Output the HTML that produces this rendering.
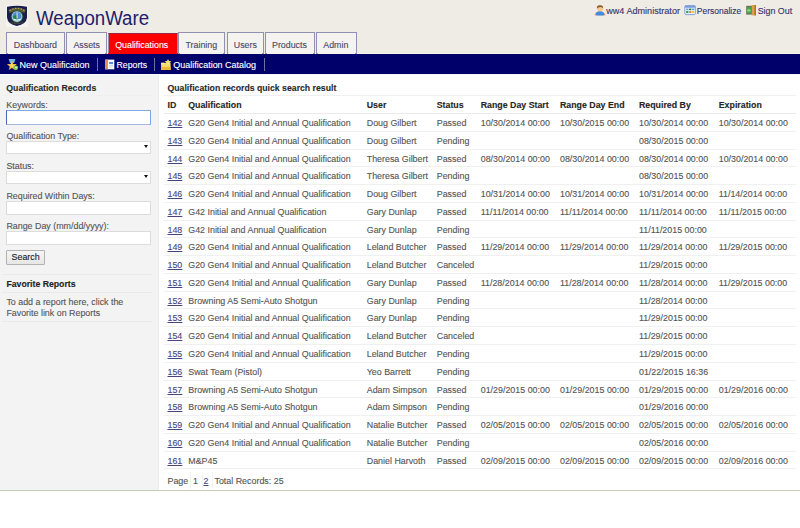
<!DOCTYPE html>
<html><head><meta charset="utf-8"><title>WeaponWare</title>
<style>
html,body{margin:0;padding:0;width:800px;height:528px;overflow:hidden;background:#fff;}
body{position:relative;font-family:"Liberation Sans",sans-serif;}
.t{position:absolute;white-space:nowrap;line-height:12px;-webkit-text-stroke:0.12px currentColor;}
.r{position:absolute;}
</style></head><body>
<div class="r" style="left:0px;top:0px;width:800px;height:54px;background:#efebe5"></div>
<div class="r" style="left:6px;top:5px;width:22px;height:22px;background:#f6f4f0"></div>
<svg class="r" style="left:4px;top:3px" width="26" height="26" viewBox="0 0 26 26">
<path d="M3 3.8 Q13 1.8 23 3.8 L23 14.5 Q22.4 21.2 12.8 23 Q3.6 21.2 3 14.5 Z" fill="#1a1e50"/>
<path d="M4.4 6.8 Q13 2.6 21.6 6.8 L20.6 10 Q13 6.6 5.4 10 Z" fill="#5a5a38"/>
<path d="M5.6 7.6 L6.8 7 M8.2 6.2 L9.6 5.8 M11 5.4 L12.4 5.3 M13.8 5.3 L15.2 5.4 M16.6 5.8 L18 6.3 M19.2 7 L20.4 7.6" stroke="#c8b058" stroke-width="1.1"/>
<circle cx="13" cy="13.6" r="6.3" fill="#35583a"/>
<circle cx="13" cy="13.6" r="5.3" fill="#a8d0e8"/>
<circle cx="13" cy="13.4" r="4.4" fill="#4a8ccc"/>
<path d="M8.8 15 Q10.2 11 13 12.2 L13 17.4 Q10 17 8.8 15Z" fill="#2a8040"/>
<rect x="12.5" y="9.3" width="1.1" height="6" fill="#d0e4ee"/>
<path d="M9.2 15.6 Q13 17.2 16.9 15.6 L16.4 16.9 Q13 18.4 9.7 16.9Z" fill="#d8eef8"/>
<path d="M6.5 19.2 Q13 22.4 19.5 19.2" stroke="#4a4a38" stroke-width="0.9" fill="none"/>
</svg>
<div class="t" style="left:36.30px;top:11.61px;font-size:19.6px;color:#20206a;-webkit-text-stroke:0;transform:scaleX(0.952);transform-origin:0 0">WeaponWare</div>
<div class="t" style="left:606.20px;top:4.65px;font-size:9.1px;color:#34346a;">ww4 Administrator</div>
<div class="t" style="left:696.80px;top:4.85px;font-size:8.5px;color:#34346a;">Personalize</div>
<div class="t" style="left:757.70px;top:4.73px;font-size:8.85px;color:#34346a;">Sign Out</div>
<svg class="r" style="left:592px;top:3px" width="16" height="16" viewBox="0 0 16 16">
<path d="M2.6 12.3 Q2.8 8.4 8 8.4 Q13.2 8.4 13.4 12.3 Z" fill="#f0a060"/>
<path d="M3.6 12.3 Q3.8 8.2 8 8.2 Q12.2 8.2 12.4 12.3 L11.5 12.3 L11.5 12.6 L4.5 12.6 L4.5 12.3Z" fill="#3c8ee0"/>
<circle cx="8" cy="5.4" r="2.9" fill="#f6c890"/>
<path d="M4.9 5.6 Q4.6 2.2 8 2.3 Q11.4 2.2 11.1 5.6 Q10.5 4 8.6 4 Q6 4 4.9 5.6Z" fill="#8a5a28"/>
</svg>
<svg class="r" style="left:682px;top:2px" width="16" height="16" viewBox="0 0 16 16">
<rect x="2.8" y="3.6" width="10.6" height="9" rx="1.2" fill="#e4f2fa" stroke="#7c9ce0" stroke-width="0.9"/>
<rect x="2.8" y="3.6" width="10.6" height="2.2" rx="1" fill="#7c9ce0"/>
<rect x="4.2" y="6.6" width="2.2" height="1.5" fill="#60a0d8"/>
<rect x="7.1" y="6.6" width="2.2" height="1.5" fill="#2a7a3a"/>
<rect x="10" y="6.6" width="2.2" height="1.5" fill="#60a0c8"/>
<rect x="4.2" y="9" width="2.2" height="2" fill="#3a9a48"/>
<rect x="7.1" y="9" width="2.2" height="2" fill="#f08a30"/>
<rect x="10" y="9" width="2.2" height="2" fill="#f8c838"/>
</svg>
<svg class="r" style="left:743px;top:2px" width="16" height="16" viewBox="0 0 16 16">
<rect x="8.6" y="3" width="4.4" height="10.4" fill="#d8a050"/>
<rect x="11.4" y="3" width="1.6" height="10.4" fill="#b07828"/>
<rect x="3.2" y="3.8" width="5.6" height="8.8" fill="#707060"/>
<rect x="3.8" y="5.2" width="4.6" height="6" fill="#48a848"/>
<ellipse cx="5.8" cy="8.4" rx="1.8" ry="1.2" fill="#90d880"/>
</svg>
<div class="r" style="left:6px;top:32px;width:59px;height:22px;background:#f5f3ef;box-sizing:border-box;border:1.75px solid #9090b0;border-bottom:none"></div>
<div class="r" style="left:66.25px;top:32px;width:40.25px;height:22px;background:#f5f3ef;box-sizing:border-box;border:1.75px solid #9090b0;border-bottom:none"></div>
<div class="r" style="left:107.5px;top:32.5px;width:70.0px;height:21.5px;background:#fc0000;box-sizing:border-box;border:1px solid #9a90b0;border-top:1px solid #a02040;border-bottom:none"></div>
<div class="r" style="left:178px;top:32px;width:47px;height:22px;background:#f5f3ef;box-sizing:border-box;border:1.75px solid #9090b0;border-bottom:none"></div>
<div class="r" style="left:226.5px;top:32px;width:37.5px;height:22px;background:#f5f3ef;box-sizing:border-box;border:1.75px solid #9090b0;border-bottom:none"></div>
<div class="r" style="left:265px;top:32px;width:49.5px;height:22px;background:#f5f3ef;box-sizing:border-box;border:1.75px solid #9090b0;border-bottom:none"></div>
<div class="r" style="left:316px;top:32px;width:41.2px;height:22px;background:#f5f3ef;box-sizing:border-box;border:1.75px solid #9090b0;border-bottom:none"></div>
<div class="t" style="left:13.75px;top:38.83px;font-size:8.85px;color:#48486a;">Dashboard</div>
<div class="t" style="left:73.40px;top:38.83px;font-size:8.85px;color:#48486a;">Assets</div>
<div class="t" style="left:115.20px;top:38.83px;font-size:8.85px;color:#ffffff;">Qualifications</div>
<div class="t" style="left:185.50px;top:38.83px;font-size:8.85px;color:#48486a;">Training</div>
<div class="t" style="left:233.75px;top:38.83px;font-size:8.85px;color:#48486a;">Users</div>
<div class="t" style="left:272.00px;top:38.83px;font-size:8.85px;color:#48486a;">Products</div>
<div class="t" style="left:323.25px;top:38.83px;font-size:8.85px;color:#48486a;">Admin</div>
<div class="r" style="left:0px;top:52.5px;width:800px;height:1.5px;background:#f6f4ec"></div>
<div class="r" style="left:6px;top:52.5px;width:1.75px;height:1.5px;background:#9090b0"></div>
<div class="r" style="left:7.75px;top:52.5px;width:55.5px;height:1.5px;background:#f5f3ef"></div>
<div class="r" style="left:63.25px;top:52.5px;width:1.75px;height:1.5px;background:#9090b0"></div>
<div class="r" style="left:66.25px;top:52.5px;width:1.75px;height:1.5px;background:#9090b0"></div>
<div class="r" style="left:68.0px;top:52.5px;width:36.75px;height:1.5px;background:#f5f3ef"></div>
<div class="r" style="left:104.75px;top:52.5px;width:1.75px;height:1.5px;background:#9090b0"></div>
<div class="r" style="left:107.5px;top:52.5px;width:70.0px;height:1.5px;background:#fc0000"></div>
<div class="r" style="left:178px;top:52.5px;width:1.75px;height:1.5px;background:#9090b0"></div>
<div class="r" style="left:179.75px;top:52.5px;width:43.5px;height:1.5px;background:#f5f3ef"></div>
<div class="r" style="left:223.25px;top:52.5px;width:1.75px;height:1.5px;background:#9090b0"></div>
<div class="r" style="left:226.5px;top:52.5px;width:1.75px;height:1.5px;background:#9090b0"></div>
<div class="r" style="left:228.25px;top:52.5px;width:34.0px;height:1.5px;background:#f5f3ef"></div>
<div class="r" style="left:262.25px;top:52.5px;width:1.75px;height:1.5px;background:#9090b0"></div>
<div class="r" style="left:265px;top:52.5px;width:1.75px;height:1.5px;background:#9090b0"></div>
<div class="r" style="left:266.75px;top:52.5px;width:46.0px;height:1.5px;background:#f5f3ef"></div>
<div class="r" style="left:312.75px;top:52.5px;width:1.75px;height:1.5px;background:#9090b0"></div>
<div class="r" style="left:316px;top:52.5px;width:1.75px;height:1.5px;background:#9090b0"></div>
<div class="r" style="left:317.75px;top:52.5px;width:37.7px;height:1.5px;background:#f5f3ef"></div>
<div class="r" style="left:355.45px;top:52.5px;width:1.75px;height:1.5px;background:#9090b0"></div>
<div class="r" style="left:0px;top:54px;width:800px;height:20px;background:#00006a"></div>
<div class="r" style="left:0px;top:74px;width:800px;height:1px;background:#f6f6fa"></div>
<div class="t" style="left:19.50px;top:58.98px;font-size:9.0px;color:#ffffff;">New Qualification</div>
<div class="t" style="left:116.50px;top:59.07px;font-size:8.75px;color:#ffffff;">Reports</div>
<div class="t" style="left:173.25px;top:58.99px;font-size:8.97px;color:#ffffff;">Qualification Catalog</div>
<div class="r" style="left:97.1px;top:58px;width:1px;height:12.5px;background:#7070a0"></div>
<div class="r" style="left:154.1px;top:58px;width:1px;height:12.5px;background:#7070a0"></div>
<div class="r" style="left:263.5px;top:58px;width:1px;height:12.5px;background:#7070a0"></div>
<svg class="r" style="left:4px;top:55px" width="18" height="18" viewBox="0 0 18 18">
<path d="M4.6 3.9 L11.4 3.9 L10.2 7.9 L6 7.9 Z" fill="#70b4e8"/>
<path d="M7.9 5.4 L9.25 8.9 L12.9 9.1 L10.1 11.4 L11 14.9 L7.9 12.9 L4.8 14.9 L5.7 11.4 L2.9 9.1 L6.55 8.9Z" fill="#f0c038"/>
<path d="M7.9 8 L8.6 9.8 L10.4 10 L9 11.1 L9.4 12.7 L7.9 11.8 L6.4 12.7 L6.8 11.1 L5.4 10 L7.2 9.8Z" fill="#f8dc70"/>
<circle cx="11.8" cy="12.8" r="2.4" fill="#78c050"/>
<circle cx="12" cy="12.5" r="1.1" fill="#d8f4c0"/>
</svg>
<svg class="r" style="left:102px;top:56px" width="16" height="16" viewBox="0 0 16 16">
<rect x="3.2" y="3.6" width="9.1" height="9.7" fill="#fafafa"/>
<rect x="3.2" y="3.6" width="2.7" height="9.7" fill="#d88a58"/>
<rect x="7.1" y="6" width="3.9" height="2" fill="#5a88d0"/>
<rect x="7.1" y="8.8" width="3.9" height="0.8" fill="#a8c8e0"/>
<rect x="7.1" y="10.6" width="3.9" height="0.7" fill="#c8d0c0"/>
</svg>
<svg class="r" style="left:158px;top:55px" width="18" height="18" viewBox="0 0 18 18">
<rect x="3.1" y="7.8" width="9.5" height="7.2" fill="#f4dc68"/>
<rect x="3.1" y="12" width="9.5" height="3" fill="#f0b838"/>
<rect x="3.1" y="7.8" width="3" height="1.6" fill="#fff0b0"/>
<path d="M10 3.9 L11 6.1 L13.4 6.3 L11.6 7.8 L12.1 10.1 L10 8.9 L7.9 10.1 L8.4 7.8 L6.6 6.3 L9 6.1Z" fill="#f8e870"/>
</svg>
<div class="r" style="left:0px;top:75px;width:159px;height:415px;background:#f3f3f3"></div>
<div class="r" style="left:158px;top:75px;width:1px;height:415px;background:#ececec"></div>
<div class="t" style="left:6.30px;top:81.88px;font-size:8.71px;font-weight:bold;color:#2a2a2a;">Qualification Records</div>
<div class="r" style="left:2px;top:95px;width:150px;height:1px;background:#efefef"></div>
<div class="t" style="left:6.30px;top:98.92px;font-size:8.9px;color:#555555;">Keywords:</div>
<div class="r" style="left:6px;top:110px;width:145px;height:14.5px;box-sizing:border-box;background:#fff;border:1px solid #80a8e4;border-bottom:1.5px solid #a8b8dc;border-left:1.6px solid #4a64b4"></div>
<div class="t" style="left:6.40px;top:129.92px;font-size:8.9px;color:#555555;">Qualification Type:</div>
<div class="r" style="left:6px;top:140.5px;width:144.5px;height:13.2px;box-sizing:border-box;background:#fff;border:1px solid #dcdcdc"></div>
<div class="r" style="left:143.5px;top:145px;width:0;height:0;border-left:2.3px solid transparent;border-right:2.3px solid transparent;border-top:3.5px solid #111"></div>
<div class="t" style="left:6.40px;top:159.92px;font-size:8.9px;color:#555555;">Status:</div>
<div class="r" style="left:6px;top:171px;width:144.5px;height:13px;box-sizing:border-box;background:#fff;border:1px solid #dcdcdc"></div>
<div class="r" style="left:143.5px;top:175.2px;width:0;height:0;border-left:2.3px solid transparent;border-right:2.3px solid transparent;border-top:3.5px solid #111"></div>
<div class="t" style="left:6.40px;top:189.92px;font-size:8.9px;color:#555555;">Required Within Days:</div>
<div class="r" style="left:6px;top:201px;width:144.5px;height:13.5px;box-sizing:border-box;background:#fff;border:1px solid #dcdcdc"></div>
<div class="t" style="left:6.40px;top:220.32px;font-size:8.9px;color:#555555;">Range Day (mm/dd/yyyy):</div>
<div class="r" style="left:6px;top:231.4px;width:144.5px;height:13.3px;box-sizing:border-box;background:#fff;border:1px solid #dcdcdc"></div>
<div class="r" style="left:6px;top:249.5px;width:39px;height:15px;box-sizing:border-box;background:linear-gradient(#f6f6f6,#e6e6e6);border:1px solid #b2b2b2;border-radius:1px"></div>
<div class="t" style="left:11.60px;top:250.73px;font-size:8.85px;color:#222;">Search</div>
<div class="r" style="left:2px;top:274px;width:150px;height:1px;background:#eaeaea"></div>
<div class="t" style="left:6.40px;top:277.98px;font-size:8.71px;font-weight:bold;color:#222;">Favorite Reports</div>
<div class="r" style="left:2px;top:292px;width:150px;height:1px;background:#eaeaea"></div>
<div class="t" style="left:6.40px;top:295.52px;font-size:8.9px;color:#555555;">To add a report here, click the</div>
<div class="t" style="left:6.40px;top:307.12px;font-size:8.9px;color:#555555;">Favorite link on Reports</div>
<div class="r" style="left:2px;top:321px;width:150px;height:1px;background:#eaeaea"></div>
<div class="r" style="left:0px;top:490px;width:800px;height:1px;background:#c3d1bb"></div>
<div class="t" style="left:167.50px;top:81.88px;font-size:8.71px;font-weight:bold;color:#2a2a2a;">Qualification records quick search result</div>
<div class="r" style="left:164px;top:95px;width:632px;height:1px;background:#f0f0f0"></div>
<div class="t" style="left:167.50px;top:99.45px;font-size:8.8px;font-weight:bold;color:#262626;">ID</div>
<div class="t" style="left:188.25px;top:99.45px;font-size:8.8px;font-weight:bold;color:#262626;">Qualification</div>
<div class="t" style="left:366.75px;top:99.45px;font-size:8.8px;font-weight:bold;color:#262626;">User</div>
<div class="t" style="left:436.75px;top:99.45px;font-size:8.8px;font-weight:bold;color:#262626;">Status</div>
<div class="t" style="left:480.75px;top:99.45px;font-size:8.8px;font-weight:bold;color:#262626;">Range Day Start</div>
<div class="t" style="left:560.00px;top:99.45px;font-size:8.8px;font-weight:bold;color:#262626;">Range Day End</div>
<div class="t" style="left:639.00px;top:99.45px;font-size:8.8px;font-weight:bold;color:#262626;">Required By</div>
<div class="t" style="left:718.75px;top:99.45px;font-size:8.8px;font-weight:bold;color:#262626;">Expiration</div>
<div class="r" style="left:164px;top:113px;width:632px;height:1px;background:#ebebeb"></div>
<div class="t" style="left:167.50px;top:117.02px;font-size:8.9px;color:#46467e;text-decoration:underline">142</div>
<div class="t" style="left:188.25px;top:117.02px;font-size:8.9px;color:#555;">G20 Gen4 Initial and Annual Qualification</div>
<div class="t" style="left:366.75px;top:117.02px;font-size:8.9px;color:#555;">Doug Gilbert</div>
<div class="t" style="left:436.75px;top:117.02px;font-size:8.9px;color:#555;">Passed</div>
<div class="t" style="left:480.75px;top:117.02px;font-size:8.9px;color:#555;">10/30/2014 00:00</div>
<div class="t" style="left:560.00px;top:117.02px;font-size:8.9px;color:#555;">10/30/2015 00:00</div>
<div class="t" style="left:639.00px;top:117.02px;font-size:8.9px;color:#555;">10/30/2014 00:00</div>
<div class="t" style="left:718.75px;top:117.02px;font-size:8.9px;color:#555;">10/30/2014 00:00</div>
<div class="r" style="left:164px;top:131px;width:632px;height:1px;background:#f0f0f0"></div>
<div class="t" style="left:167.50px;top:134.79px;font-size:8.9px;color:#46467e;text-decoration:underline">143</div>
<div class="t" style="left:188.25px;top:134.79px;font-size:8.9px;color:#555;">G20 Gen4 Initial and Annual Qualification</div>
<div class="t" style="left:366.75px;top:134.79px;font-size:8.9px;color:#555;">Doug Gilbert</div>
<div class="t" style="left:436.75px;top:134.79px;font-size:8.9px;color:#555;">Pending</div>
<div class="t" style="left:639.00px;top:134.79px;font-size:8.9px;color:#555;">08/30/2015 00:00</div>
<div class="r" style="left:164px;top:149px;width:632px;height:1px;background:#f0f0f0"></div>
<div class="t" style="left:167.50px;top:152.56px;font-size:8.9px;color:#46467e;text-decoration:underline">144</div>
<div class="t" style="left:188.25px;top:152.56px;font-size:8.9px;color:#555;">G20 Gen4 Initial and Annual Qualification</div>
<div class="t" style="left:366.75px;top:152.56px;font-size:8.9px;color:#555;">Theresa Gilbert</div>
<div class="t" style="left:436.75px;top:152.56px;font-size:8.9px;color:#555;">Passed</div>
<div class="t" style="left:480.75px;top:152.56px;font-size:8.9px;color:#555;">08/30/2014 00:00</div>
<div class="t" style="left:560.00px;top:152.56px;font-size:8.9px;color:#555;">08/30/2014 00:00</div>
<div class="t" style="left:639.00px;top:152.56px;font-size:8.9px;color:#555;">08/30/2014 00:00</div>
<div class="t" style="left:718.75px;top:152.56px;font-size:8.9px;color:#555;">10/30/2014 00:00</div>
<div class="r" style="left:164px;top:166px;width:632px;height:1px;background:#f0f0f0"></div>
<div class="t" style="left:167.50px;top:170.33px;font-size:8.9px;color:#46467e;text-decoration:underline">145</div>
<div class="t" style="left:188.25px;top:170.33px;font-size:8.9px;color:#555;">G20 Gen4 Initial and Annual Qualification</div>
<div class="t" style="left:366.75px;top:170.33px;font-size:8.9px;color:#555;">Theresa Gilbert</div>
<div class="t" style="left:436.75px;top:170.33px;font-size:8.9px;color:#555;">Pending</div>
<div class="t" style="left:639.00px;top:170.33px;font-size:8.9px;color:#555;">08/30/2015 00:00</div>
<div class="r" style="left:164px;top:184px;width:632px;height:1px;background:#f0f0f0"></div>
<div class="t" style="left:167.50px;top:188.10px;font-size:8.9px;color:#46467e;text-decoration:underline">146</div>
<div class="t" style="left:188.25px;top:188.10px;font-size:8.9px;color:#555;">G20 Gen4 Initial and Annual Qualification</div>
<div class="t" style="left:366.75px;top:188.10px;font-size:8.9px;color:#555;">Doug Gilbert</div>
<div class="t" style="left:436.75px;top:188.10px;font-size:8.9px;color:#555;">Passed</div>
<div class="t" style="left:480.75px;top:188.10px;font-size:8.9px;color:#555;">10/31/2014 00:00</div>
<div class="t" style="left:560.00px;top:188.10px;font-size:8.9px;color:#555;">10/31/2014 00:00</div>
<div class="t" style="left:639.00px;top:188.10px;font-size:8.9px;color:#555;">10/31/2014 00:00</div>
<div class="t" style="left:718.75px;top:188.10px;font-size:8.9px;color:#555;">11/14/2014 00:00</div>
<div class="r" style="left:164px;top:202px;width:632px;height:1px;background:#f0f0f0"></div>
<div class="t" style="left:167.50px;top:205.87px;font-size:8.9px;color:#46467e;text-decoration:underline">147</div>
<div class="t" style="left:188.25px;top:205.87px;font-size:8.9px;color:#555;">G42 Initial and Annual Qualification</div>
<div class="t" style="left:366.75px;top:205.87px;font-size:8.9px;color:#555;">Gary Dunlap</div>
<div class="t" style="left:436.75px;top:205.87px;font-size:8.9px;color:#555;">Passed</div>
<div class="t" style="left:480.75px;top:205.87px;font-size:8.9px;color:#555;">11/11/2014 00:00</div>
<div class="t" style="left:560.00px;top:205.87px;font-size:8.9px;color:#555;">11/11/2014 00:00</div>
<div class="t" style="left:639.00px;top:205.87px;font-size:8.9px;color:#555;">11/11/2014 00:00</div>
<div class="t" style="left:718.75px;top:205.87px;font-size:8.9px;color:#555;">11/11/2015 00:00</div>
<div class="r" style="left:164px;top:220px;width:632px;height:1px;background:#f0f0f0"></div>
<div class="t" style="left:167.50px;top:223.64px;font-size:8.9px;color:#46467e;text-decoration:underline">148</div>
<div class="t" style="left:188.25px;top:223.64px;font-size:8.9px;color:#555;">G42 Initial and Annual Qualification</div>
<div class="t" style="left:366.75px;top:223.64px;font-size:8.9px;color:#555;">Gary Dunlap</div>
<div class="t" style="left:436.75px;top:223.64px;font-size:8.9px;color:#555;">Pending</div>
<div class="t" style="left:639.00px;top:223.64px;font-size:8.9px;color:#555;">11/11/2015 00:00</div>
<div class="r" style="left:164px;top:237px;width:632px;height:1px;background:#f0f0f0"></div>
<div class="t" style="left:167.50px;top:241.41px;font-size:8.9px;color:#46467e;text-decoration:underline">149</div>
<div class="t" style="left:188.25px;top:241.41px;font-size:8.9px;color:#555;">G20 Gen4 Initial and Annual Qualification</div>
<div class="t" style="left:366.75px;top:241.41px;font-size:8.9px;color:#555;">Leland Butcher</div>
<div class="t" style="left:436.75px;top:241.41px;font-size:8.9px;color:#555;">Passed</div>
<div class="t" style="left:480.75px;top:241.41px;font-size:8.9px;color:#555;">11/29/2014 00:00</div>
<div class="t" style="left:560.00px;top:241.41px;font-size:8.9px;color:#555;">11/29/2014 00:00</div>
<div class="t" style="left:639.00px;top:241.41px;font-size:8.9px;color:#555;">11/29/2014 00:00</div>
<div class="t" style="left:718.75px;top:241.41px;font-size:8.9px;color:#555;">11/29/2015 00:00</div>
<div class="r" style="left:164px;top:255px;width:632px;height:1px;background:#f0f0f0"></div>
<div class="t" style="left:167.50px;top:259.18px;font-size:8.9px;color:#46467e;text-decoration:underline">150</div>
<div class="t" style="left:188.25px;top:259.18px;font-size:8.9px;color:#555;">G20 Gen4 Initial and Annual Qualification</div>
<div class="t" style="left:366.75px;top:259.18px;font-size:8.9px;color:#555;">Leland Butcher</div>
<div class="t" style="left:436.75px;top:259.18px;font-size:8.9px;color:#555;">Canceled</div>
<div class="t" style="left:639.00px;top:259.18px;font-size:8.9px;color:#555;">11/29/2015 00:00</div>
<div class="r" style="left:164px;top:273px;width:632px;height:1px;background:#f0f0f0"></div>
<div class="t" style="left:167.50px;top:276.95px;font-size:8.9px;color:#46467e;text-decoration:underline">151</div>
<div class="t" style="left:188.25px;top:276.95px;font-size:8.9px;color:#555;">G20 Gen4 Initial and Annual Qualification</div>
<div class="t" style="left:366.75px;top:276.95px;font-size:8.9px;color:#555;">Gary Dunlap</div>
<div class="t" style="left:436.75px;top:276.95px;font-size:8.9px;color:#555;">Passed</div>
<div class="t" style="left:480.75px;top:276.95px;font-size:8.9px;color:#555;">11/28/2014 00:00</div>
<div class="t" style="left:560.00px;top:276.95px;font-size:8.9px;color:#555;">11/28/2014 00:00</div>
<div class="t" style="left:639.00px;top:276.95px;font-size:8.9px;color:#555;">11/28/2014 00:00</div>
<div class="t" style="left:718.75px;top:276.95px;font-size:8.9px;color:#555;">11/29/2015 00:00</div>
<div class="r" style="left:164px;top:291px;width:632px;height:1px;background:#f0f0f0"></div>
<div class="t" style="left:167.50px;top:294.72px;font-size:8.9px;color:#46467e;text-decoration:underline">152</div>
<div class="t" style="left:188.25px;top:294.72px;font-size:8.9px;color:#555;">Browning A5 Semi-Auto Shotgun</div>
<div class="t" style="left:366.75px;top:294.72px;font-size:8.9px;color:#555;">Gary Dunlap</div>
<div class="t" style="left:436.75px;top:294.72px;font-size:8.9px;color:#555;">Pending</div>
<div class="t" style="left:639.00px;top:294.72px;font-size:8.9px;color:#555;">11/28/2014 00:00</div>
<div class="r" style="left:164px;top:308px;width:632px;height:1px;background:#f0f0f0"></div>
<div class="t" style="left:167.50px;top:312.49px;font-size:8.9px;color:#46467e;text-decoration:underline">153</div>
<div class="t" style="left:188.25px;top:312.49px;font-size:8.9px;color:#555;">G20 Gen4 Initial and Annual Qualification</div>
<div class="t" style="left:366.75px;top:312.49px;font-size:8.9px;color:#555;">Gary Dunlap</div>
<div class="t" style="left:436.75px;top:312.49px;font-size:8.9px;color:#555;">Pending</div>
<div class="t" style="left:639.00px;top:312.49px;font-size:8.9px;color:#555;">11/29/2015 00:00</div>
<div class="r" style="left:164px;top:326px;width:632px;height:1px;background:#f0f0f0"></div>
<div class="t" style="left:167.50px;top:330.26px;font-size:8.9px;color:#46467e;text-decoration:underline">154</div>
<div class="t" style="left:188.25px;top:330.26px;font-size:8.9px;color:#555;">G20 Gen4 Initial and Annual Qualification</div>
<div class="t" style="left:366.75px;top:330.26px;font-size:8.9px;color:#555;">Leland Butcher</div>
<div class="t" style="left:436.75px;top:330.26px;font-size:8.9px;color:#555;">Canceled</div>
<div class="t" style="left:639.00px;top:330.26px;font-size:8.9px;color:#555;">11/29/2015 00:00</div>
<div class="r" style="left:164px;top:344px;width:632px;height:1px;background:#f0f0f0"></div>
<div class="t" style="left:167.50px;top:348.03px;font-size:8.9px;color:#46467e;text-decoration:underline">155</div>
<div class="t" style="left:188.25px;top:348.03px;font-size:8.9px;color:#555;">G20 Gen4 Initial and Annual Qualification</div>
<div class="t" style="left:366.75px;top:348.03px;font-size:8.9px;color:#555;">Leland Butcher</div>
<div class="t" style="left:436.75px;top:348.03px;font-size:8.9px;color:#555;">Pending</div>
<div class="t" style="left:639.00px;top:348.03px;font-size:8.9px;color:#555;">11/29/2015 00:00</div>
<div class="r" style="left:164px;top:362px;width:632px;height:1px;background:#f0f0f0"></div>
<div class="t" style="left:167.50px;top:365.80px;font-size:8.9px;color:#46467e;text-decoration:underline">156</div>
<div class="t" style="left:188.25px;top:365.80px;font-size:8.9px;color:#555;">Swat Team (Pistol)</div>
<div class="t" style="left:366.75px;top:365.80px;font-size:8.9px;color:#555;">Yeo Barrett</div>
<div class="t" style="left:436.75px;top:365.80px;font-size:8.9px;color:#555;">Pending</div>
<div class="t" style="left:639.00px;top:365.80px;font-size:8.9px;color:#555;">01/22/2015 16:36</div>
<div class="r" style="left:164px;top:380px;width:632px;height:1px;background:#f0f0f0"></div>
<div class="t" style="left:167.50px;top:383.57px;font-size:8.9px;color:#46467e;text-decoration:underline">157</div>
<div class="t" style="left:188.25px;top:383.57px;font-size:8.9px;color:#555;">Browning A5 Semi-Auto Shotgun</div>
<div class="t" style="left:366.75px;top:383.57px;font-size:8.9px;color:#555;">Adam Simpson</div>
<div class="t" style="left:436.75px;top:383.57px;font-size:8.9px;color:#555;">Passed</div>
<div class="t" style="left:480.75px;top:383.57px;font-size:8.9px;color:#555;">01/29/2015 00:00</div>
<div class="t" style="left:560.00px;top:383.57px;font-size:8.9px;color:#555;">01/29/2015 00:00</div>
<div class="t" style="left:639.00px;top:383.57px;font-size:8.9px;color:#555;">01/29/2015 00:00</div>
<div class="t" style="left:718.75px;top:383.57px;font-size:8.9px;color:#555;">01/29/2016 00:00</div>
<div class="r" style="left:164px;top:397px;width:632px;height:1px;background:#f0f0f0"></div>
<div class="t" style="left:167.50px;top:401.34px;font-size:8.9px;color:#46467e;text-decoration:underline">158</div>
<div class="t" style="left:188.25px;top:401.34px;font-size:8.9px;color:#555;">Browning A5 Semi-Auto Shotgun</div>
<div class="t" style="left:366.75px;top:401.34px;font-size:8.9px;color:#555;">Adam Simpson</div>
<div class="t" style="left:436.75px;top:401.34px;font-size:8.9px;color:#555;">Pending</div>
<div class="t" style="left:639.00px;top:401.34px;font-size:8.9px;color:#555;">01/29/2016 00:00</div>
<div class="r" style="left:164px;top:415px;width:632px;height:1px;background:#f0f0f0"></div>
<div class="t" style="left:167.50px;top:419.11px;font-size:8.9px;color:#46467e;text-decoration:underline">159</div>
<div class="t" style="left:188.25px;top:419.11px;font-size:8.9px;color:#555;">G20 Gen4 Initial and Annual Qualification</div>
<div class="t" style="left:366.75px;top:419.11px;font-size:8.9px;color:#555;">Natalie Butcher</div>
<div class="t" style="left:436.75px;top:419.11px;font-size:8.9px;color:#555;">Passed</div>
<div class="t" style="left:480.75px;top:419.11px;font-size:8.9px;color:#555;">02/05/2015 00:00</div>
<div class="t" style="left:560.00px;top:419.11px;font-size:8.9px;color:#555;">02/05/2015 00:00</div>
<div class="t" style="left:639.00px;top:419.11px;font-size:8.9px;color:#555;">02/05/2015 00:00</div>
<div class="t" style="left:718.75px;top:419.11px;font-size:8.9px;color:#555;">02/05/2016 00:00</div>
<div class="r" style="left:164px;top:433px;width:632px;height:1px;background:#f0f0f0"></div>
<div class="t" style="left:167.50px;top:436.88px;font-size:8.9px;color:#46467e;text-decoration:underline">160</div>
<div class="t" style="left:188.25px;top:436.88px;font-size:8.9px;color:#555;">G20 Gen4 Initial and Annual Qualification</div>
<div class="t" style="left:366.75px;top:436.88px;font-size:8.9px;color:#555;">Natalie Butcher</div>
<div class="t" style="left:436.75px;top:436.88px;font-size:8.9px;color:#555;">Pending</div>
<div class="t" style="left:639.00px;top:436.88px;font-size:8.9px;color:#555;">02/05/2016 00:00</div>
<div class="r" style="left:164px;top:451px;width:632px;height:1px;background:#f0f0f0"></div>
<div class="t" style="left:167.50px;top:454.65px;font-size:8.9px;color:#46467e;text-decoration:underline">161</div>
<div class="t" style="left:188.25px;top:454.65px;font-size:8.9px;color:#555;">M&amp;P45</div>
<div class="t" style="left:366.75px;top:454.65px;font-size:8.9px;color:#555;">Daniel Harvoth</div>
<div class="t" style="left:436.75px;top:454.65px;font-size:8.9px;color:#555;">Passed</div>
<div class="t" style="left:480.75px;top:454.65px;font-size:8.9px;color:#555;">02/09/2015 00:00</div>
<div class="t" style="left:560.00px;top:454.65px;font-size:8.9px;color:#555;">02/09/2015 00:00</div>
<div class="t" style="left:639.00px;top:454.65px;font-size:8.9px;color:#555;">02/09/2015 00:00</div>
<div class="t" style="left:718.75px;top:454.65px;font-size:8.9px;color:#555;">02/09/2016 00:00</div>
<div class="r" style="left:164px;top:468px;width:632px;height:1px;background:#f0f0f0"></div>
<div class="r" style="left:189.5px;top:472px;width:1px;height:17px;background:#f2f2f2"></div>
<div class="r" style="left:201.5px;top:472px;width:1px;height:17px;background:#f2f2f2"></div>
<div class="r" style="left:211.5px;top:472px;width:1px;height:17px;background:#f2f2f2"></div>
<div class="t" style="left:167.50px;top:475.42px;font-size:8.9px;color:#555;">Page</div>
<div class="t" style="left:193.00px;top:475.42px;font-size:8.9px;color:#555;">1</div>
<div class="t" style="left:203.50px;top:475.42px;font-size:8.9px;color:#46467e;text-decoration:underline">2</div>
<div class="t" style="left:214.50px;top:475.42px;font-size:8.9px;color:#555;">Total Records: 25</div>
</body></html>
